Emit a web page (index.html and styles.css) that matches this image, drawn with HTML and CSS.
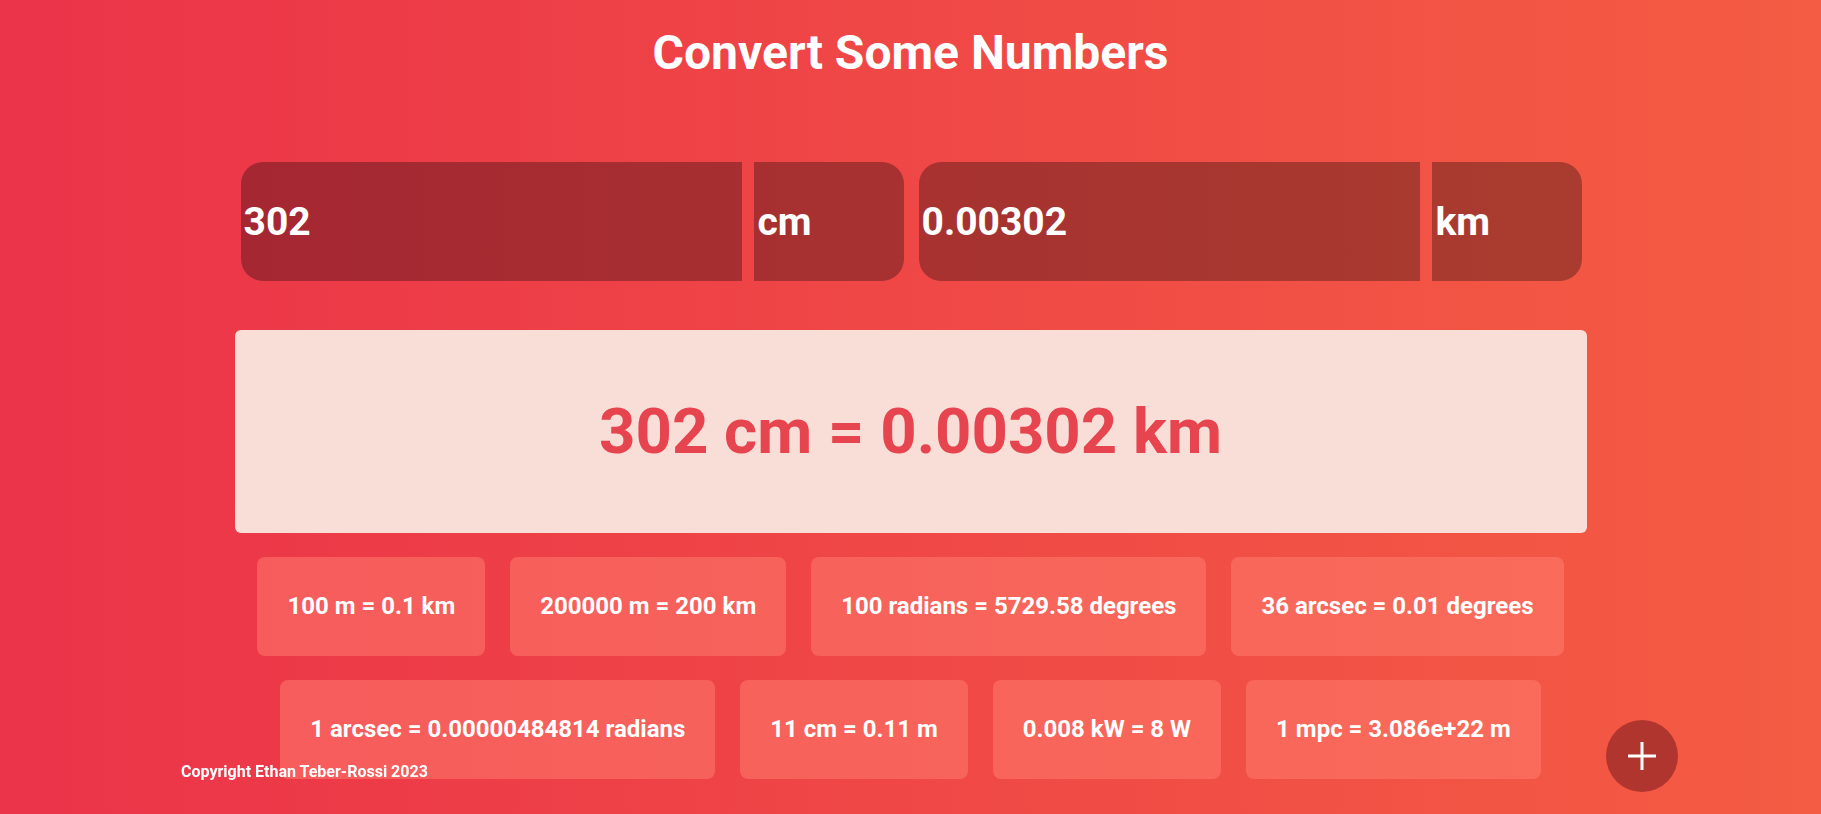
FILE: index.html
```html
<!DOCTYPE html>
<html lang="en">
<head>
<meta charset="utf-8">
<title>Convert Some Numbers</title>
<link rel="stylesheet" href="styles.css">
</head>
<body>
<main class="page">
  <h1 class="title">Convert Some Numbers</h1>
  <div class="wrap">
    <div class="inputs">
      <div class="group">
        <input class="num" type="text" value="302">
        <select class="unit"><option>cm</option></select>
      </div>
      <div class="group">
        <input class="num" type="text" value="0.00302">
        <select class="unit"><option>km</option></select>
      </div>
    </div>
    <div class="result">302 cm = 0.00302 km</div>
    <div class="chips">
      <div class="chip">100 m = 0.1 km</div>
      <div class="chip">200000 m = 200 km</div>
      <div class="chip">100 radians = 5729.58 degrees</div>
      <div class="chip">36 arcsec = 0.01 degrees</div>
      <div class="chip">1 arcsec = 0.00000484814 radians</div>
      <div class="chip">11 cm = 0.11 m</div>
      <div class="chip">0.008 kW = 8 W</div>
      <div class="chip">1 mpc = 3.086e+22 m</div>
    </div>
  </div>
</main>
<footer class="copyright">Copyright Ethan Teber-Rossi 2023</footer>
<button class="fab" aria-label="Add">
  <svg width="30" height="30" viewBox="0 0 30 30"><path d="M15 1v28M1 15h28" stroke="#fff" stroke-width="3"/></svg>
</button>
</body>
</html>
```
FILE: styles.css
```css
html, body {
  margin: 0;
  padding: 0;
}
body {
  min-height: 100vh;
  background: linear-gradient(to right, #eb3349, #f45c43);
  font-family: Roboto, "Liberation Sans", sans-serif;
  color: #fff;
  overflow: hidden;
}
.page {
  display: flex;
  flex-direction: column;
  align-items: center;
}
.title {
  margin: 0;
  padding-top: 25px;
  font-size: 48px;
  font-weight: 700;
  line-height: 56px;
}
.wrap {
  width: 1352px;
  margin-top: 81px;
}
.inputs {
  display: flex;
  gap: 15px;
  padding: 0 6px;
}
.group {
  flex: 1;
  display: flex;
  gap: 12px;
  height: 119px;
}
.num, .unit {
  border: none;
  outline: none;
  margin: 0;
  background: rgba(0, 0, 0, 0.3);
  color: #fff;
  font-family: Roboto, "Liberation Sans", sans-serif;
  font-weight: 700;
  font-size: 39px;
  height: 100%;
  box-sizing: border-box;
}
.num {
  flex: 1;
  min-width: 0;
  padding: 0 3px;
  border-radius: 22px 0 0 22px;
}
.unit {
  width: 150px;
  padding: 0 4px;
  appearance: none;
  -webkit-appearance: none;
  border-radius: 0 22px 22px 0;
}
.result {
  margin-top: 49px;
  height: 203px;
  display: flex;
  align-items: center;
  justify-content: center;
  background: #f9ddd7;
  border-radius: 6px;
  color: #e6444e;
  font-size: 63.5px;
  font-weight: 700;
}
.chips {
  margin-top: 24px;
  display: flex;
  flex-wrap: wrap;
  justify-content: center;
  gap: 24px 25px;
}
.chip {
  padding: 35px 30px;
  line-height: 29px;
  font-size: 24px;
  font-weight: 700;
  border-radius: 8px;
  background: rgba(255, 128, 112, 0.5);
}
.copyright {
  position: fixed;
  left: 181px;
  bottom: 33px;
  font-size: 16px;
  font-weight: 700;
  line-height: 19px;
}
.fab {
  position: fixed;
  right: 143px;
  bottom: 22px;
  width: 72px;
  height: 72px;
  border: none;
  border-radius: 50%;
  padding: 0;
  background: #b0352f;
  display: flex;
  align-items: center;
  justify-content: center;
}
```
